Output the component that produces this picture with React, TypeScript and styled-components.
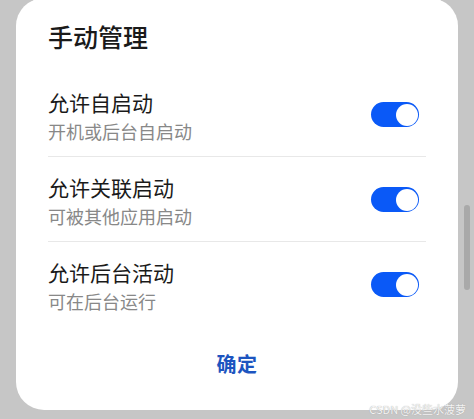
import React from "react";
import styled, { createGlobalStyle } from "styled-components";

const Global = createGlobalStyle`
  html, body { margin: 0; padding: 0; }
  body {
    width: 474px;
    height: 419px;
    overflow: hidden;
    background: #c6c6c6;
    font-family: "Noto Sans CJK SC", "Noto Sans", sans-serif;
  }
`;

const Page = styled.div`
  position: relative;
  display: flex;
  width: 474px;
  height: 419px;
  overflow: hidden;
  background: #c6c6c6;
`;

const Gutter = styled.div`
  width: 16px;
  flex: none;
  display: flex;
  justify-content: center;
`;

const ScrollThumb = styled.div`
  width: 6px;
  height: 85px;
  margin-top: 205px;
  margin-left: 1px;
  border-radius: 3px;
  background: #a9a9a9;
`;

const Card = styled.div`
  width: 442px;
  height: 412px;
  margin-top: -2px;
  flex: none;
  box-sizing: border-box;
  background: #ffffff;
  border-radius: 28px;
  padding: 26px 32px 0 32px;
  display: flex;
  flex-direction: column;
`;

const Title = styled.div`
  font-size: 25px;
  line-height: 25px;
  font-weight: 500;
  color: #1a1a1a;
  margin-bottom: 23px;
`;

const Row = styled.div<{ $last?: boolean }>`
  display: flex;
  align-items: center;
  padding: 20px 0 16px 0;
  border-bottom: ${(p) => (p.$last ? "none" : "1px solid #e8e8e8")};
`;

const Texts = styled.div`
  flex: 1;
  display: flex;
  flex-direction: column;
  gap: 9px;
`;

const RowTitle = styled.div`
  font-size: 21px;
  line-height: 21px;
  color: #1a1a1a;
`;

const RowSub = styled.div`
  font-size: 18px;
  line-height: 18px;
  color: #888888;
`;

const Track = styled.div<{ $on: boolean }>`
  position: relative;
  width: 48px;
  height: 25px;
  margin-right: 7px;
  margin-bottom: 3px;
  border-radius: 13px;
  background: ${(p) => (p.$on ? "#0a59f7" : "#cccccc")};
  flex: none;
`;

const Knob = styled.div<{ $on: boolean }>`
  position: absolute;
  top: 1.5px;
  ${(p) => (p.$on ? "right: 1.5px;" : "left: 1.5px;")}
  width: 22px;
  height: 22px;
  border-radius: 50%;
  background: #ffffff;
`;

const Footer = styled.div`
  display: flex;
  justify-content: center;
  padding-top: 28px;
`;

const Confirm = styled.div`
  font-size: 20px;
  line-height: 20px;
  font-weight: 600;
  color: #1d55c0;
  letter-spacing: 0.5px;
`;

const Watermark = styled.div`
  position: absolute;
  right: 8px;
  bottom: 4px;
  font-size: 11px;
  line-height: 12px;
  color: #f4f4f4;
  text-shadow: 0 0 1px #9a9a9a;
  white-space: nowrap;
`;

const Toggle = ({ on }: { on: boolean }) => (
  <Track $on={on}>
    <Knob $on={on} />
  </Track>
);

const items = [
  { title: "允许自启动", sub: "开机或后台自启动" },
  { title: "允许关联启动", sub: "可被其他应用启动" },
  { title: "允许后台活动", sub: "可在后台运行" },
];

export default function App() {
  return (
    <Page>
      <Global />
      <Gutter />
      <Card>
        <Title>手动管理</Title>
        {items.map((it, i) => (
          <Row key={it.title} $last={i === items.length - 1}>
            <Texts>
              <RowTitle>{it.title}</RowTitle>
              <RowSub>{it.sub}</RowSub>
            </Texts>
            <Toggle on />
          </Row>
        ))}
        <Footer>
          <Confirm>确定</Confirm>
        </Footer>
      </Card>
      <Gutter>
        <ScrollThumb />
      </Gutter>
      <Watermark>CSDN @没些水菠萝</Watermark>
    </Page>
  );
}
